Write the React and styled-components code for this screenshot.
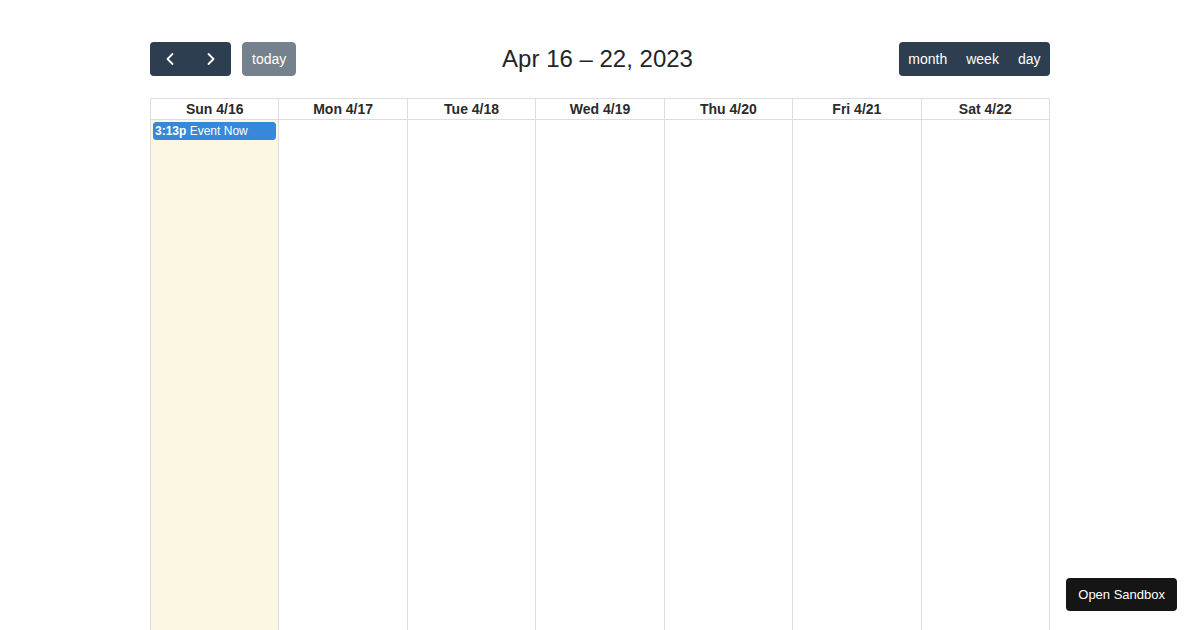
import React from "react";
import styled, { createGlobalStyle } from "styled-components";

const GlobalStyle = createGlobalStyle`
  html, body {
    margin: 0;
    padding: 0;
    background: #fff;
    font-family: "Liberation Sans", Arial, sans-serif;
    font-size: 14px;
    color: #212529;
  }
`;

const days = [
  { label: "Sun 4/16", today: true },
  { label: "Mon 4/17" },
  { label: "Tue 4/18" },
  { label: "Wed 4/19" },
  { label: "Thu 4/20" },
  { label: "Fri 4/21" },
  { label: "Sat 4/22" },
];

export default function App() {
  return (
    <Page>
      <GlobalStyle />
      <Calendar>
        <Toolbar>
          <Chunk>
            <Group>
              <Button aria-label="prev" $icon>
                <Chevron dir="left" />
              </Button>
              <Button aria-label="next" $icon>
                <Chevron dir="right" />
              </Button>
            </Group>
            <Button disabled>today</Button>
          </Chunk>
          <Title>Apr 16 – 22, 2023</Title>
          <Chunk>
            <Group>
              <Button>month</Button>
              <Button>week</Button>
              <Button>day</Button>
            </Group>
          </Chunk>
        </Toolbar>
        <Grid>
          {days.map((d) => (
            <HeadCell key={d.label}>{d.label}</HeadCell>
          ))}
          {days.map((d) => (
            <DayCell key={d.label} $today={d.today}>
              {d.today && (
                <Event>
                  <b>3:13p</b> Event Now
                </Event>
              )}
            </DayCell>
          ))}
        </Grid>
      </Calendar>
      <Sandbox>Open Sandbox</Sandbox>
    </Page>
  );
}

function Chevron({ dir }) {
  const d = dir === "left" ? "M8.5 2 L3.5 7 L8.5 12" : "M3.5 2 L8.5 7 L3.5 12";
  return (
    <svg width="12" height="14" viewBox="0 0 12 14" fill="none">
      <path d={d} stroke="#fff" strokeWidth="1.8" strokeLinecap="round" strokeLinejoin="round" />
    </svg>
  );
}

const Page = styled.div`
  height: 700px;
  padding: 42px 150px 0;
  box-sizing: border-box;
  overflow: hidden;
`;

const Calendar = styled.div`
  display: flex;
  flex-direction: column;
  height: 100%;
`;

const Toolbar = styled.div`
  display: flex;
  align-items: center;
  justify-content: space-between;
  margin-bottom: 22px;
`;

const Chunk = styled.div`
  display: flex;
  align-items: center;
  gap: 11px;
`;

const Group = styled.div`
  display: flex;
  background: #2c3e50;
  border-radius: 4px;
  & > button {
    border: none;
    background: transparent;
    border-radius: 0;
  }
`;

const Button = styled.button`
  display: flex;
  align-items: center;
  justify-content: center;
  height: 34px;
  width: ${(p) => (p.$icon ? "40.5px" : "auto")};
  padding: 0 ${(p) => (p.$icon ? "0" : "9.5px")};
  border: 1px solid #2c3e50;
  border-radius: 4px;
  background: #2c3e50;
  color: #fff;
  font-family: "Liberation Sans", Arial, sans-serif;
  font-size: 14px;
  line-height: 1.5;
  &:disabled {
    opacity: 0.65;
    padding: 0 9px;
  }
`;

const Title = styled.h2`
  margin: 0;
  font-size: 24px;
  font-weight: 400;
  color: #212529;
`;

const Grid = styled.div`
  flex: 1;
  display: grid;
  grid-template-columns: repeat(7, 1fr);
  grid-template-rows: 21px 1fr;
  border-top: 1px solid #ddd;
  border-left: 1px solid #ddd;
`;

const HeadCell = styled.div`
  display: flex;
  align-items: center;
  justify-content: center;
  border-right: 1px solid #ddd;
  border-bottom: 1px solid #ddd;
  font-weight: 700;
  font-size: 14px;
  color: #2b2b2b;
`;

const DayCell = styled.div`
  border-right: 1px solid #ddd;
  background: ${(p) => (p.$today ? "#fcf7e3" : "#fff")};
  padding: 2px 2px 0;
`;

const Event = styled.div`
  background: #3788d8;
  border: 1px solid #3788d8;
  border-radius: 3px;
  color: #fff;
  font-size: 12px;
  line-height: 16px;
  padding: 0 1px;
  white-space: nowrap;
  overflow: hidden;
`;

const Sandbox = styled.button`
  position: fixed;
  right: 23px;
  bottom: 19px;
  height: 33px;
  padding: 0 12px;
  border: none;
  border-radius: 4px;
  background: #151515;
  color: #fff;
  font-family: "Liberation Sans", Arial, sans-serif;
  font-size: 13px;
`;
